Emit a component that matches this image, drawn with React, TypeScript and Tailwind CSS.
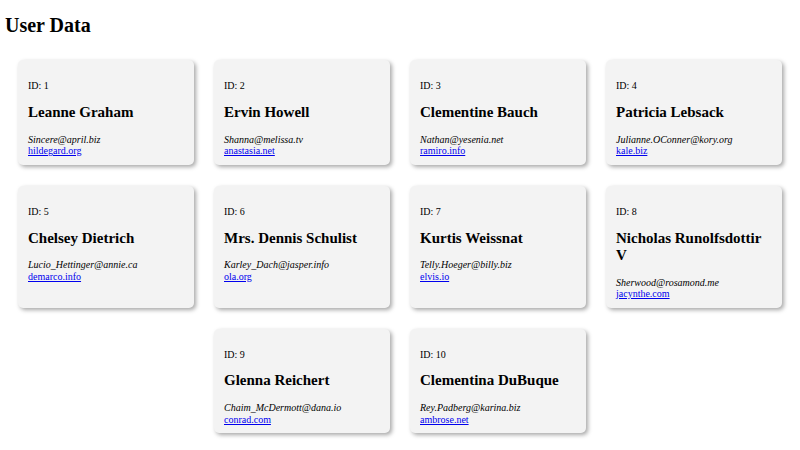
import React from 'react';

type User = { id: number; name: string; email: string; website: string };

const users: User[] = [
  { id: 1, name: 'Leanne Graham', email: 'Sincere@april.biz', website: 'hildegard.org' },
  { id: 2, name: 'Ervin Howell', email: 'Shanna@melissa.tv', website: 'anastasia.net' },
  { id: 3, name: 'Clementine Bauch', email: 'Nathan@yesenia.net', website: 'ramiro.info' },
  { id: 4, name: 'Patricia Lebsack', email: 'Julianne.OConner@kory.org', website: 'kale.biz' },
  { id: 5, name: 'Chelsey Dietrich', email: 'Lucio_Hettinger@annie.ca', website: 'demarco.info' },
  { id: 6, name: 'Mrs. Dennis Schulist', email: 'Karley_Dach@jasper.info', website: 'ola.org' },
  { id: 7, name: 'Kurtis Weissnat', email: 'Telly.Hoeger@billy.biz', website: 'elvis.io' },
  { id: 8, name: 'Nicholas Runolfsdottir V', email: 'Sherwood@rosamond.me', website: 'jacynthe.com' },
  { id: 9, name: 'Glenna Reichert', email: 'Chaim_McDermott@dana.io', website: 'conrad.com' },
  { id: 10, name: 'Clementina DuBuque', email: 'Rey.Padberg@karina.biz', website: 'ambrose.net' },
];

const UserCard: React.FC<{ user: User }> = ({ user }) => (
  <div className="w-[176px] bg-[#f3f3f3] rounded-[5px] shadow-[2px_2px_4px_rgba(0,0,0,0.35)] px-[10px] pt-[10px] pb-[8px]">
    <p className="text-[10px] leading-[1.15] my-[10px]">ID: {user.id}</p>
    <h2 className="text-[15px] font-bold leading-[1.15] my-[12.45px]">{user.name}</h2>
    <p className="text-[10px] leading-[1.15] mt-[12.45px]">
      <i>{user.email}</i>
      <br />
      <a href="#" className="text-[#0000ee] underline">{user.website}</a>
    </p>
  </div>
);

const App: React.FC = () => {
  return (
    <div className="min-h-screen w-full bg-white text-black font-['Liberation_Serif',serif] px-[5px]">
      <h1 className="text-[20px] font-bold leading-[1.15] pt-[13.5px] mb-[23.5px]">User Data</h1>
      <div className="flex flex-wrap justify-center gap-x-[20px] gap-y-[21px] pb-[16px]">
        {users.map((u) => (
          <UserCard key={u.id} user={u} />
        ))}
      </div>
    </div>
  );
};

export default App;
